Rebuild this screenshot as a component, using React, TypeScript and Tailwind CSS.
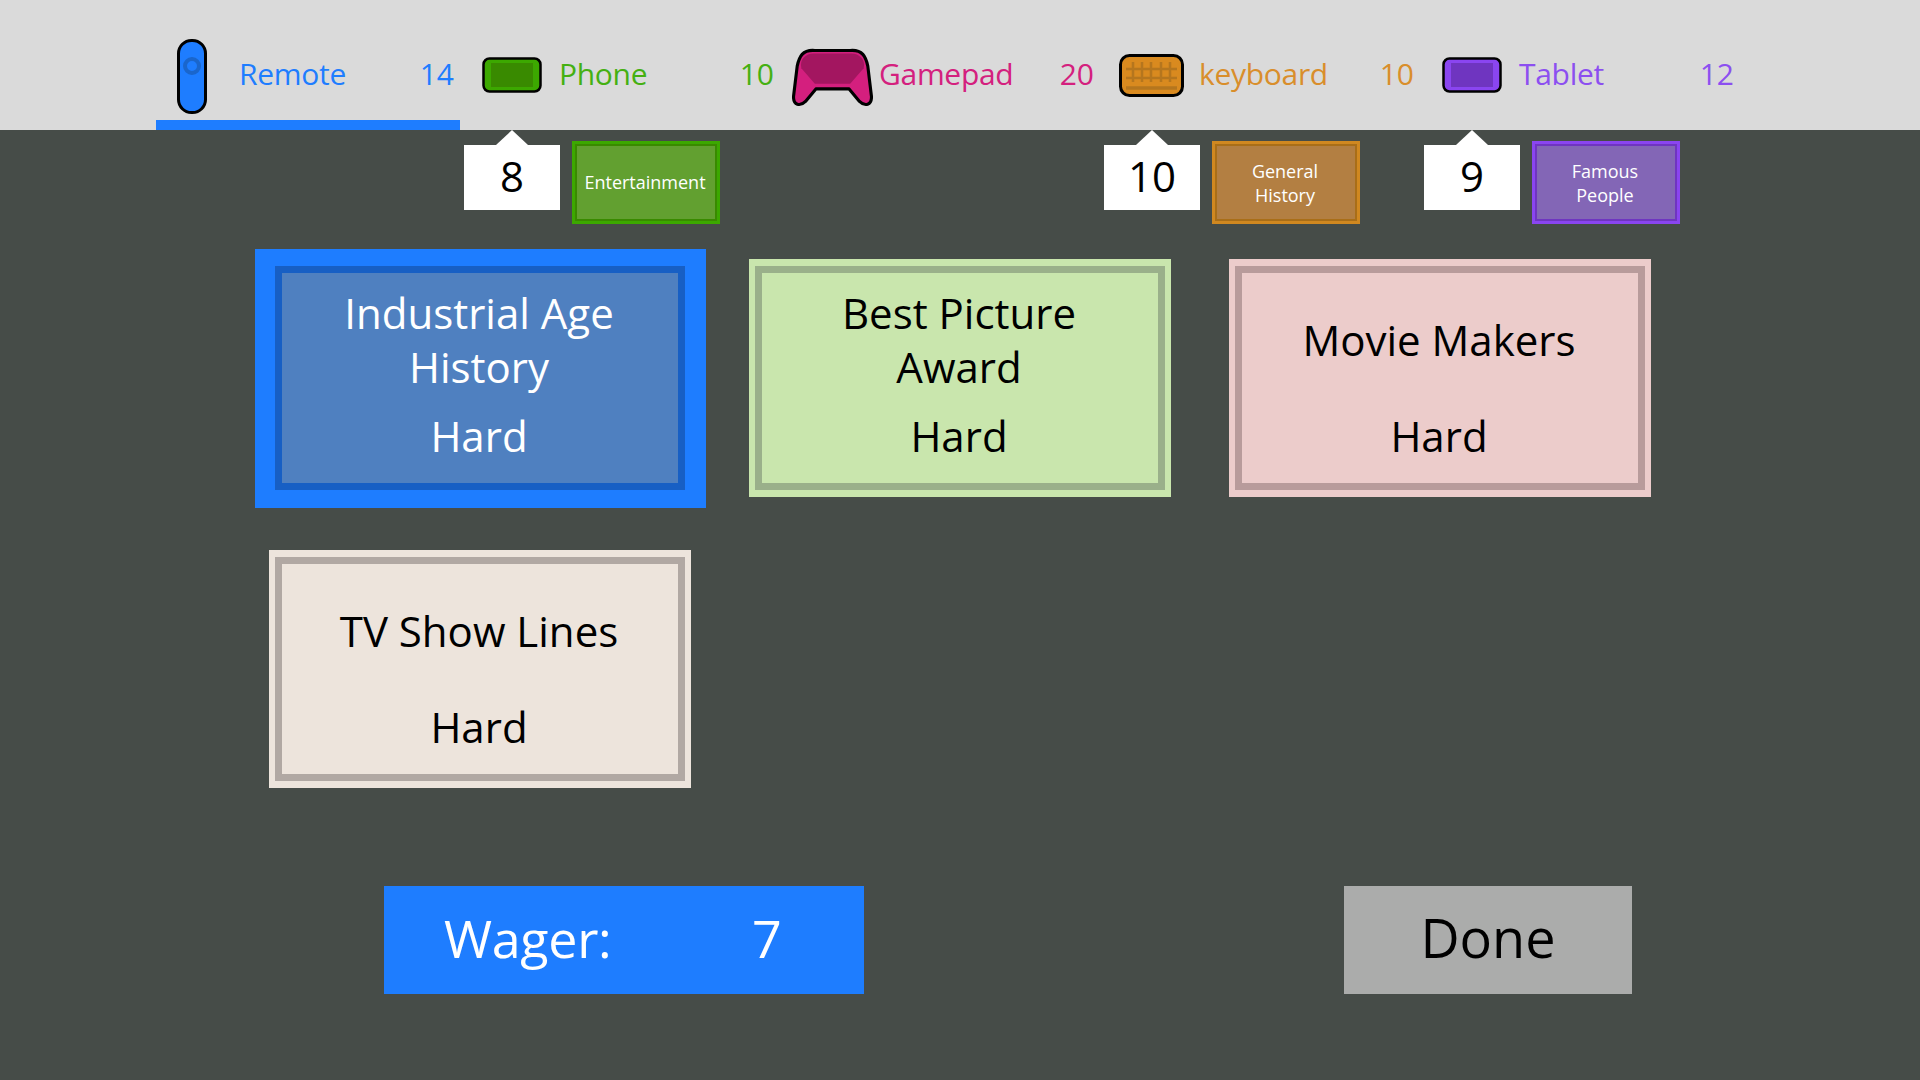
const tabs = [
  { name: "Remote", count: 14, text: "text-[#1e7dff]", active: true },
  { name: "Phone", count: 10, text: "text-[#45b012]", active: false },
  { name: "Gamepad", count: 20, text: "text-[#d4207e]", active: false },
  { name: "keyboard", count: 10, text: "text-[#d98e2b]", active: false },
  { name: "Tablet", count: 12, text: "text-[#8c4ff0]", active: false },
]

const popups = [
  null,
  { value: 8, lines: ["Entertainment"], outer: "border-[#3ca800]", inner: "border-[#398a00]", fill: "bg-[#62a030]" },
  null,
  { value: 10, lines: ["General", "History"], outer: "border-[#d08820]", inner: "border-[#a96e18]", fill: "bg-[#b37f42]" },
  { value: 9, lines: ["Famous", "People"], outer: "border-[#8a45f0]", inner: "border-[#6f35c0]", fill: "bg-[#8366b6]" },
]

const cards = [
  { title: "Industrial Age History", band: "bg-[#1e7dff]", border: "border-[#175fc4]", fill: "bg-[#4f80c0]", text: "text-white", selected: true },
  { title: "Best Picture Award", band: "bg-[#c9e6ad]", border: "border-[#9ab08a]", fill: "bg-[#c9e6ad]", text: "text-black", selected: false },
  { title: "Movie Makers", band: "bg-[#eccccb]", border: "border-[#b89b9b]", fill: "bg-[#eccccb]", text: "text-black", selected: false },
  { title: "TV Show Lines", band: "bg-[#ede4dc]", border: "border-[#b1a8a3]", fill: "bg-[#ede4dc]", text: "text-black", selected: false },
]

function TabIcon({ name }: { name: string }) {
  if (name === "Remote") {
    return (
      <svg width="30" height="75" viewBox="0 0 30 75" className="mt-[3px]">
        <rect x="1.5" y="1.5" width="27" height="72" rx="13" fill="#1e7dff" stroke="#000" strokeWidth="3" />
        <circle cx="15" cy="27" r="7" fill="none" stroke="#1a66cc" strokeWidth="4" />
      </svg>
    )
  }
  if (name === "Gamepad") {
    return (
      <svg width="81" height="59" viewBox="0 0 78 56" className="mt-[5px] shrink-0">
        <path
          d="M22 2 H56 C68 1 71 8 73 17 L76.5 46 C77 55 70 56 65 51 L55 39 H23 L13 51 C8 56 1 55 1.5 46 L5 17 C7 8 10 1 22 2 Z"
          fill="#d41f7e"
          stroke="#000"
          strokeWidth="3"
          strokeLinejoin="round"
        />
        <path d="M21 5 H57 C65 5 71 11 69 19 L56 34 H22 L9 19 C7 11 13 5 21 5 Z" fill="#a31660" />
      </svg>
    )
  }
  if (name === "keyboard") {
    return (
      <svg width="65" height="43" viewBox="0 0 65 43" className="-ml-[1px]">
        <rect x="1.5" y="1.5" width="62" height="40" rx="9" fill="#d98a1f" stroke="#000" strokeWidth="3" />
        <path
          d="M14 8 V28 M23 8 V28 M32 8 V28 M42 8 V28 M51 8 V28 M7 15 H58 M7 24 H58"
          stroke="#b5761e"
          strokeWidth="2.5"
          fill="none"
        />
        <path d="M7 34 H58" stroke="#b5761e" strokeWidth="3.5" />
      </svg>
    )
  }
  const isPhone = name === "Phone"
  return (
    <svg width="60" height="36" viewBox="0 0 60 36">
      <rect x="1.5" y="1.5" width="57" height="33" rx="6" fill={isPhone ? "#3ca800" : "#8a45f0"} stroke="#000" strokeWidth="2.5" />
      <rect x="9" y="6" width="42" height="24" fill={isPhone ? "#398a00" : "#6f35c0"} />
    </svg>
  )
}

export default function App() {
  return (
    <div className="h-screen overflow-hidden bg-[#464c48] font-['Open_Sans',sans-serif]">
      <div className="bg-[#dadada] h-[130px] pl-[156px] grid grid-cols-[repeat(5,304px)] gap-x-[16px]">
        {tabs.map((tab) => (
          <div
            key={tab.name}
            className={`flex items-center h-[130px] pt-[30px] pr-[6px] text-[30px] border-b-[10px] ${tab.text} ${tab.active ? "border-[#1e7dff]" : "border-transparent"}`}
          >
            <div className="w-[72px] h-[75px] flex items-center justify-center shrink-0">
              <TabIcon name={tab.name} />
            </div>
            <span className="ml-[11px] -mt-[3px] tracking-[-0.3px]">{tab.name}</span>
            <span className="ml-auto -mt-[3px]">{tab.count}</span>
          </div>
        ))}
      </div>

      <div className="h-[129px] pl-[156px] grid grid-cols-[repeat(5,304px)] gap-x-[16px]">
        {popups.map((popup, i) => (
          <div key={i} className="flex items-start gap-x-[12px] -ml-[12px]">
            {popup && (
              <>
                <div className="relative mt-[15px] w-[96px] h-[65px] bg-white flex items-center justify-center pb-[4px] text-[42px] text-black">
                  <div className="absolute left-[32px] -top-[15px] w-[32px] h-[15px] bg-white [clip-path:polygon(50%_0,100%_100%,0_100%)]" />
                  {popup.value}
                </div>
                <div className={`mt-[11px] w-[148px] h-[83px] border-[3px] ${popup.outer}`}>
                  <div className={`h-full border-[2px] ${popup.inner} ${popup.fill} ${popup.lines.length === 1 ? "pb-[2px]" : ""} flex flex-col items-center justify-center pr-[2px] text-[18px] leading-[24px] text-white`}>
                    {popup.lines.map((line) => (
                      <span key={line}>{line}</span>
                    ))}
                  </div>
                </div>
              </>
            )}
          </div>
        ))}
      </div>

      <div className="pl-[269px] grid grid-cols-[repeat(3,422px)] auto-rows-[238px] gap-x-[58px] gap-y-[53px]">
        {cards.map((card) => (
          <div
            key={card.title}
            className={`${card.band} ${card.selected ? "-ml-[14px] -mr-[15px] -mt-[10px] -mb-[11px] pl-[20px] pr-[21px] pt-[17px] pb-[18px]" : "px-[6px] py-[7px]"}`}
          >
            <div className={`h-full border-[7px] ${card.border} ${card.fill} ${card.text} flex flex-col items-center text-[42px] leading-[54px] text-center pl-[38px] pr-[40px]`}>
              <div className="h-[108px] mt-[13px] flex items-center">{card.title}</div>
              <div className="mt-[15px]">Hard</div>
            </div>
          </div>
        ))}
      </div>

      <div className="mt-[98px] pl-[384px] flex gap-x-[480px]">
        <div className="w-[480px] h-[108px] bg-[#1e7dff] text-white text-[52px] tracking-[-0.3px] flex items-center pl-[60px] pb-[5px]">
          <span className="w-[308px]">Wager:</span>
          <span>7</span>
        </div>
        <div className="w-[288px] h-[108px] bg-[#abacab] text-black text-[54px] flex items-center justify-center pb-[5px]">
          Done
        </div>
      </div>
    </div>
  )
}
